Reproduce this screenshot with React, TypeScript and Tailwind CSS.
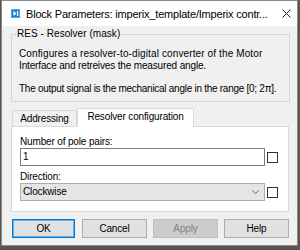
import React from "react";

function BlockIcon() {
  return (
    <svg width="9" height="9" viewBox="0 0 9 9" className="shrink-0">
      <rect x="0" y="0" width="9" height="9" fill="#1b86d6" />
      <rect x="0.5" y="0.5" width="8" height="8" fill="none" stroke="#4aa6ea" strokeWidth="1" />
      <polygon points="2.5,2 2.5,7 5.5,4.5" fill="#ffffff" />
      <rect x="6" y="2" width="1.2" height="5" fill="#ffffff" />
    </svg>
  );
}

function CloseIcon() {
  return (
    <svg width="9" height="9" viewBox="0 0 9 9" className="ml-auto shrink-0">
      <line x1="0.5" y1="0.5" x2="8.5" y2="8.5" stroke="#1a1a1a" strokeWidth="1" />
      <line x1="8.5" y1="0.5" x2="0.5" y2="8.5" stroke="#1a1a1a" strokeWidth="1" />
    </svg>
  );
}

function Chevron() {
  return (
    <svg width="7" height="4" viewBox="0 0 7 4" className="ml-auto mr-[5px]">
      <polyline points="0.5,0.5 3.5,3.5 6.5,0.5" fill="none" stroke="#606060" strokeWidth="1" />
    </svg>
  );
}

function CheckBox() {
  return <div className="ml-[2px] w-[11px] h-[11px] border border-[#333333] bg-white shrink-0" />;
}

export default function App() {
  return (
    <div className="w-[300px] h-[250px] bg-[#5e524d] pl-[1px] overflow-hidden font-['Liberation_Sans',Arial,sans-serif] text-black">
      <div className="w-[297px] h-[246px] border border-[#8a8a8a] bg-[#f0f0f0] flex flex-col">
        {/* title bar */}
        <div className="h-[25px] bg-white flex items-center pl-[9px] pr-[6px] shrink-0">
          <BlockIcon />
          <span className="ml-[6px] mt-[1px] text-[11px] tracking-[-0.2px] leading-none whitespace-nowrap">
            Block Parameters: imperix_template/Imperix contr...
          </span>
          <CloseIcon />
        </div>

        {/* group box */}
        <fieldset className="mt-[2px] ml-[9px] w-[279px] border border-[#d5d5d5] pl-[7px] pr-[2px] pt-[8px] pb-[6px] text-[10px] tracking-[-0.15px] leading-[12px] whitespace-nowrap">
          <legend className="ml-[-3px] px-[1px] leading-[12px] tracking-[0.05px]">RES - Resolver (mask)</legend>
          <p>
            <span className="tracking-[0.12px]">Configures a resolver-to-digital converter of the Motor</span>
            <br />
            Interface and retreives the measured angle.
          </p>
          <p className="mt-[11px] tracking-[-0.27px]">The output signal is the mechanical angle in the range [0; 2π].</p>
        </fieldset>

        {/* tabs */}
        <div className="mt-[6px] ml-[10px] flex items-end text-[10px] tracking-[-0.15px] leading-[12px] whitespace-nowrap">
          <div className="w-[65px] h-[16px] border border-b-0 border-[#d9d9d9] bg-[#f0f0f0] flex items-center justify-center">
            Addressing
          </div>
          <div className="relative z-10 w-[117px] h-[19px] mb-[-1px] border border-b-0 border-[#d9d9d9] bg-white flex items-center justify-center pb-[2px]">
            Resolver configuration
          </div>
        </div>

        {/* tab panel */}
        <div className="ml-[9px] w-[278px] border border-[#d9d9d9] bg-white pl-[8px] pt-[9px] pb-[10px] text-[10px] tracking-[-0.15px] leading-[12px] whitespace-nowrap">
          <div>Number of pole pairs:</div>
          <div className="flex items-center">
            <div className="w-[245px] h-[18px] border border-[#7a7a7a] bg-white pl-[2px] flex items-center">1</div>
            <CheckBox />
          </div>
          <div className="mt-[5px]">Direction:</div>
          <div className="flex items-center">
            <div className="w-[245px] h-[18px] border border-[#adadad] bg-[#e5e5e5] pl-[2px] flex items-center">
              <span>Clockwise</span>
              <Chevron />
            </div>
            <CheckBox />
          </div>
        </div>

        {/* buttons */}
        <div className="mt-[7px] ml-[10px] flex gap-[6px] text-[10px] tracking-[-0.15px] leading-[12px]">
          <div className="w-[63px] h-[19px] mr-[1px] border border-[#0078d7] shadow-[inset_0_0_0_1px_#66aee8] bg-[#e1e1e1] flex items-center justify-center">
            OK
          </div>
          <div className="w-[65px] h-[19px] border border-[#adadad] bg-[#e1e1e1] flex items-center justify-center">
            Cancel
          </div>
          <div className="w-[65px] h-[19px] border border-[#bfbfbf] bg-[#cccccc] text-[#838383] flex items-center justify-center">
            Apply
          </div>
          <div className="w-[65px] h-[19px] border border-[#adadad] bg-[#e1e1e1] flex items-center justify-center">
            Help
          </div>
        </div>
      </div>
    </div>
  );
}
